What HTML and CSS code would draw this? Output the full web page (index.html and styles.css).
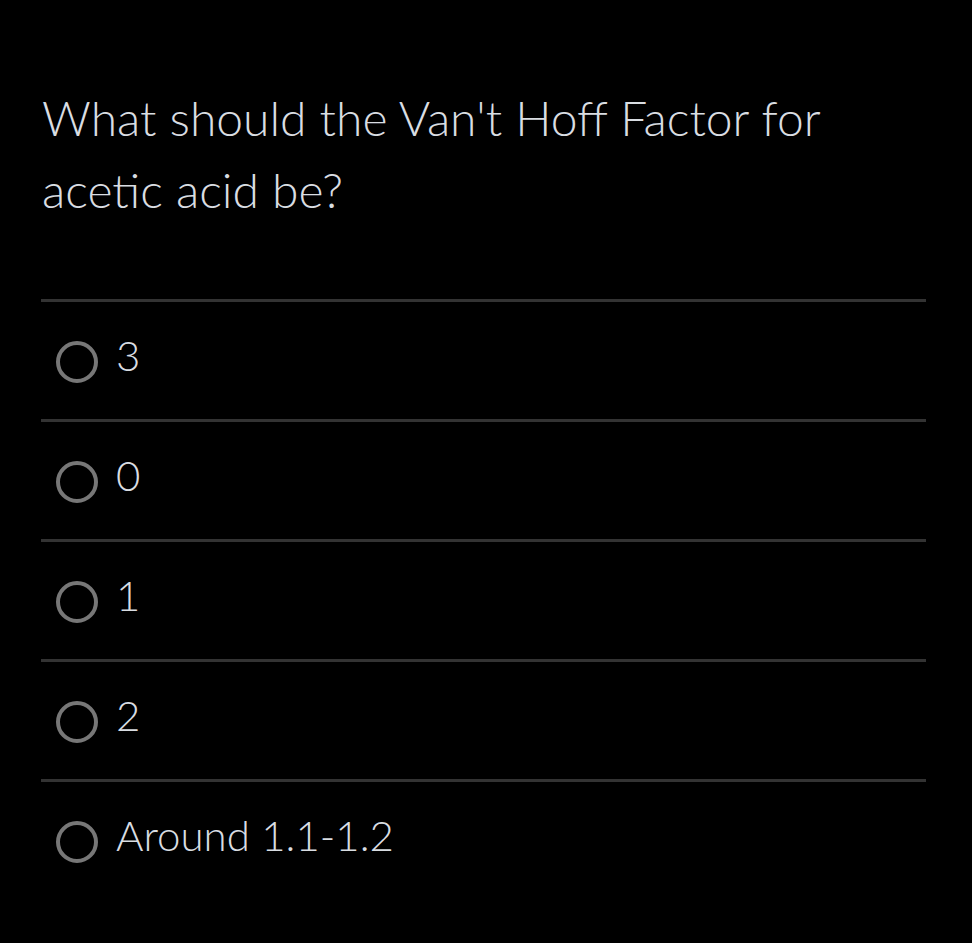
FILE: index.html
```html
<!DOCTYPE html>
<html>
<head>
<meta charset="utf-8">
<link rel="stylesheet" href="styles.css">
</head>
<body>
<div class="page">
  <h1 class="question">What should the Van't Hoff Factor for acetic acid be?</h1>
  <div class="options">
    <div class="option"><span class="radio"></span><span class="label">3</span></div>
    <div class="option"><span class="radio"></span><span class="label">0</span></div>
    <div class="option"><span class="radio"></span><span class="label">1</span></div>
    <div class="option"><span class="radio"></span><span class="label">2</span></div>
    <div class="option last"><span class="radio"></span><span class="label">Around 1.1-1.2</span></div>
  </div>
</div>
</body>
</html>
```
FILE: styles.css
```css
html, body {
  margin: 0;
  padding: 0;
  background: #000;
}
body {
  font-family: Lato, "Open Sans", sans-serif;
  font-weight: 300;
  color: #d9dde2;
}
.page {
  width: 972px;
  height: 943px;
  padding: 82px 46px 0 41px;
  box-sizing: border-box;
}
.question {
  margin: 0 0 0 1px;
  font-size: 48px;
  font-weight: 300;
  line-height: 72px;
  width: 820px;
}
.options {
  margin-top: 73px;
}
.option {
  border-top: 3px solid #333333;
  height: 117px;
  display: flex;
  align-items: center;
}
.radio {
  width: 34px;
  height: 34px;
  border: 4px solid #777777;
  border-radius: 50%;
  margin-left: 15px;
  margin-top: 2px;
  flex: none;
}
.label {
  font-size: 42px;
  margin-left: 18px;
  margin-bottom: 12px;
}
```
